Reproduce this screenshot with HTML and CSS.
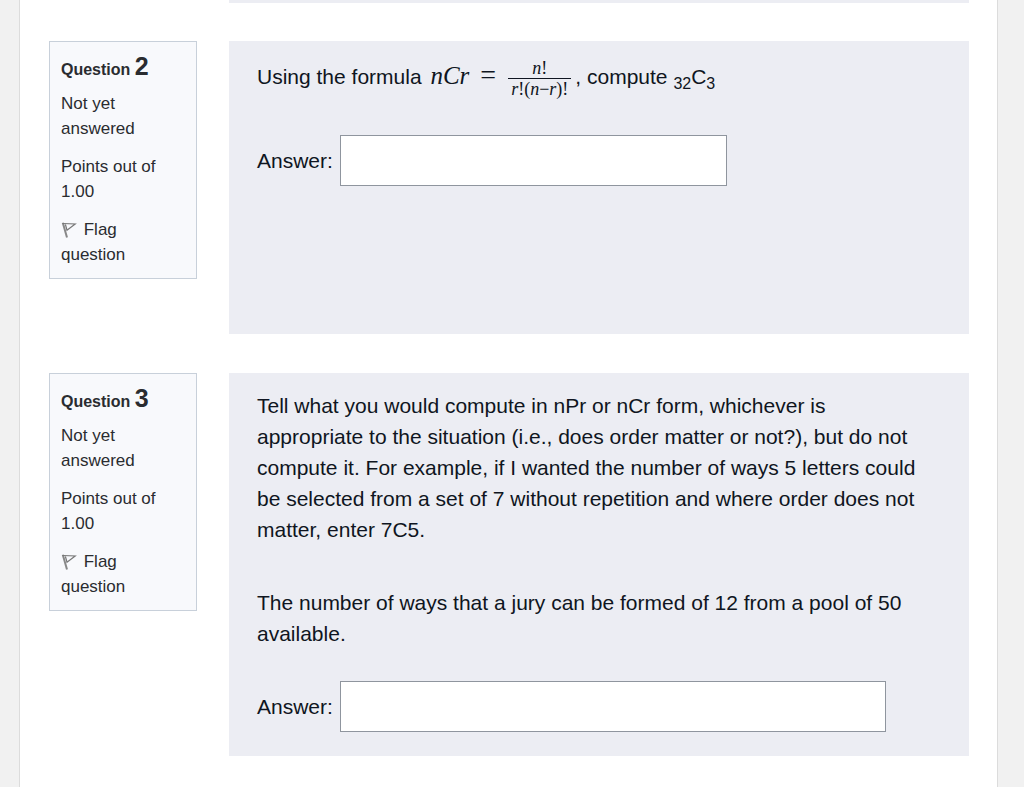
FILE: index.html
```
<!DOCTYPE html>
<html lang="en">
<head>
  <meta charset="UTF-8" />
  <meta name="viewport" content="width=device-width, initial-scale=1.0"/>
  <title>Quiz</title>

  <link rel="stylesheet" href="styles.css">
</head>
<body>
  <main class="page">
    <div class="previous"></div>

    <section class="question">
      <aside class="info">
        <h3>Question <span class="number">2</span></h3>
        <p>Not yet answered</p>
        <p>Points out of 1.00</p>
        <a class="flag" href="#flag2"><svg class="flag-icon" width="16" height="16" viewBox="0 0 16 16" aria-hidden="true"><path class="pole" d="M1.8 0.8 L6 15.5"/><path d="M1.5 1.5 L14.2 2 L6 8.2 L4.4 2.5"/></svg> Flag question</a>
      </aside>
      <div class="content formulation">
        <p class="formula">Using the formula <span class="math"><i>nCr</i><span class="equals">=</span><span class="fraction"><span class="top"><i>n</i>!</span><span class="bottom"><i>r</i>!(<i>n</i>−<i>r</i>)!</span></span></span>, compute <sub>32</sub>C<sub>3</sub></p>
        <div class="answer">
          <label for="answer2">Answer:</label>
          <input type="text" id="answer2" name="answer2" class="short" />
        </div>
      </div>
    </section>

    <section class="question">
      <aside class="info">
        <h3>Question <span class="number">3</span></h3>
        <p>Not yet answered</p>
        <p>Points out of 1.00</p>
        <a class="flag" href="#flag3"><svg class="flag-icon" width="16" height="16" viewBox="0 0 16 16" aria-hidden="true"><path class="pole" d="M1.8 0.8 L6 15.5"/><path d="M1.5 1.5 L14.2 2 L6 8.2 L4.4 2.5"/></svg> Flag question</a>
      </aside>
      <div class="content">
        <p>Tell what you would compute in nPr or nCr form, whichever is appropriate to the situation (i.e., does order matter or not?), but do not compute it. For example, if I wanted the number of ways 5 letters could be selected from a set of 7 without repetition and where order does not matter, enter 7C5.</p>
        <p>The number of ways that a jury can be formed of 12 from a pool of 50 available.</p>
        <div class="answer">
          <label for="answer3">Answer:</label>
          <input type="text" id="answer3" name="answer3" class="long" />
        </div>
      </div>
    </section>
  </main>
</body>
</html>
```
FILE: styles.css
```
:root {
  --page-border: #dcdcdc;
  --panel-color: #ecedf3;
  --info-color: #f8f9fc;
  --info-border: #c8d0da;
  --input-border: #8f959e;
  --text-color: #0f1521;
  --info-text: #2a2c30;
}

* {
  box-sizing: border-box;
}

body {
  margin: 0;
  background-color: #f1f1f1;
  font-family: "Liberation Sans", Arial, sans-serif;
  font-size: 21px;
  line-height: 31px;
  color: var(--text-color);
}

.page {
  min-height: 100vh;
  margin: 0 26px 0 19px;
  padding: 0 28px 30px 29px;
  background-color: white;
  border-left: 1px solid var(--page-border);
  border-right: 1px solid var(--page-border);
}

.previous {
  height: 3px;
  margin-bottom: 38px;
  margin-left: 180px;
  background-color: var(--panel-color);
}

.question {
  display: flex;
  align-items: flex-start;
  gap: 32px;
  margin-bottom: 39px;
}

.info {
  flex: 0 0 148px;
  padding: 9px 20px 11px 11px;
  background-color: var(--info-color);
  border: 1px solid var(--info-border);
  font-size: 17px;
  line-height: 25px;
  color: var(--info-text);
}

.info h3 {
  margin: 0 0 6px;
  font-size: 16px;
  line-height: 30px;
}

.info .number {
  font-size: 25px;
}

.info p {
  margin: 0 0 13px;
}

.flag {
  display: block;
  color: inherit;
  text-decoration: none;
}

.flag-icon {
  margin-right: 2px;
  vertical-align: -3px;
  fill: none;
  stroke: #777;
  stroke-width: 1.2;
}

.flag-icon .pole {
  stroke: #888;
  stroke-width: 2;
}

.content {
  flex: 1;
  min-width: 0;
  padding: 17px 28px 24px;
  background-color: var(--panel-color);
}

.content p {
  margin: 0 12px 42px 0;
}

.content p:last-of-type {
  margin-bottom: 32px;
}

.formulation {
  min-height: 293px;
  padding-top: 15px;
}

.content .formula:last-of-type {
  margin-bottom: 36px;
  line-height: 40px;
}

.math {
  margin-left: 3px;
  font-family: "Liberation Serif", "Times New Roman", serif;
  font-size: 25px;
}

.equals {
  margin: 0 12px 0 11px;
  font-size: 28px;
  line-height: 0;
}

.fraction {
  display: inline-flex;
  flex-direction: column;
  margin-right: 4px;
  font-size: 18px;
  line-height: 20px;
  text-align: center;
  vertical-align: middle;
}

.fraction .top {
  border-bottom: 1px solid var(--text-color);
}

.fraction .bottom {
  padding: 0 3px;
}

sub {
  font-size: 16px;
  line-height: 0;
}

.answer {
  display: flex;
  align-items: center;
  gap: 7px;
}

.answer input {
  min-width: 0;
  height: 51px;
  padding: 8px 12px;
  background-color: white;
  border: 1px solid var(--input-border);
  border-radius: 0;
  font: inherit;
  color: inherit;
}

.answer .short {
  width: 387px;
}

.answer .long {
  width: 546px;
}
```
